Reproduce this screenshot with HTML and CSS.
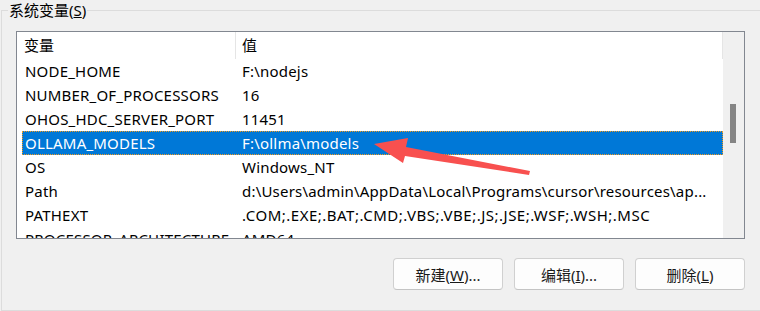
FILE: index.html
```html
<!DOCTYPE html>
<html lang="zh-CN">
<head>
  <meta charset="UTF-8" />
  <title>系统变量</title>
  <link rel="stylesheet" href="styles.css">
</head>
<body>
  <fieldset class="group">
    <legend>系统变量(<u>S</u>)</legend>
    <div class="content">
      <div class="listbox">
        <div class="table">
          <div class="header">
            <div class="hcell name">变量</div>
            <div class="hcell value">值</div>
            <div class="hcell end"></div>
          </div>
          <div class="row"><div class="cell name">NODE_HOME</div><div class="cell value">F:\nodejs</div></div>
          <div class="row"><div class="cell name">NUMBER_OF_PROCESSORS</div><div class="cell value">16</div></div>
          <div class="row"><div class="cell name">OHOS_HDC_SERVER_PORT</div><div class="cell value">11451</div></div>
          <div class="row selected"><div class="cell name">OLLAMA_MODELS</div><div class="cell value">F:\ollma\models</div></div>
          <div class="row"><div class="cell name">OS</div><div class="cell value">Windows_NT</div></div>
          <div class="row"><div class="cell name">Path</div><div class="cell value">d:\Users\admin\AppData\Local\Programs\cursor\resources\ap...</div></div>
          <div class="row"><div class="cell name">PATHEXT</div><div class="cell value punct">.COM;.EXE;.BAT;.CMD;.VBS;.VBE;.JS;.JSE;.WSF;.WSH;.MSC</div></div>
          <div class="row"><div class="cell name">PROCESSOR_ARCHITECTURE</div><div class="cell value">AMD64</div></div>
        </div>
        <div class="scrollbar"><div class="thumb"></div></div>
      </div>

      <div class="buttons">
        <button>新建(<u>W</u>)...</button>
        <button>编辑(<u>I</u>)...</button>
        <button>删除(<u>L</u>)</button>
      </div>
    </div>
  </fieldset>

  <!-- annotation arrow pointing at the selected row -->
  <svg class="arrow" width="760" height="311" viewBox="0 0 760 311">
    <polygon points="374,144 408,138 406,147 530,171 529,175 405,156 403,163" fill="#f8504f"/>
  </svg>
</body>
</html>
```

FILE: styles.css
```css
* {
  box-sizing: border-box;
}

body {
  margin: 0;
  width: 760px;
  height: 311px;
  overflow: hidden;
  position: relative;
  background-color: #f0f0f0;
  color: #000;
  font-family: "Noto Sans", "Noto Sans CJK SC", sans-serif;
  font-size: 15px;
}

.group {
  margin: 0 0 0 1px;
  padding: 0;
  width: 800px;
  height: 311px;
  border: 1px solid #dcdcdc;
}

.group legend {
  margin-left: 6px;
  padding: 0 1px;
  line-height: 20px;
}

.content {
  padding: 11px 0 0 14px;
  width: 743px;
}

.listbox {
  display: flex;
  width: 729px;
  height: 208px;
  border: 1px solid #828790;
  background-color: #fff;
}

.table {
  width: 706px;
  overflow: hidden;
}

.header {
  display: flex;
  height: 27px;
}

.hcell {
  line-height: 27px;
  height: 27px;
}

.hcell.name {
  width: 219px;
  padding-left: 7px;
  border-right: 1px solid #e5e5e5;
}

.hcell.value {
  flex: 1;
  padding-left: 6px;
}

.hcell.end {
  width: 2px;
  border-right: 1px solid #e5e5e5;
}

.row {
  display: flex;
  height: 24px;
  line-height: 24px;
  margin-left: 5px;
  white-space: nowrap;
  letter-spacing: 0.2px;
}

.cell.name {
  width: 213px;
  padding-left: 3px;
  overflow: hidden;
}

.cell.value {
  flex: 1;
  padding-left: 7px;
  overflow: hidden;
}

/* dots and semicolons are wider in the system font */
.cell.value.punct {
  letter-spacing: 0.5px;
}

.row.selected {
  background-color: #0078d7;
  color: #fff;
  outline: 1px dotted #f29a1e;
  outline-offset: -1px;
}

.scrollbar {
  width: 21px;
  background-color: #f0f0f0;
}

.thumb {
  width: 6px;
  height: 39px;
  margin: 72px 0 0 7px;
  background-color: #858585;
}

.buttons {
  display: flex;
  justify-content: flex-end;
  gap: 11px;
  margin-top: 19px;
  width: 729px;
}

.buttons button {
  width: 110px;
  height: 32px;
  padding: 0;
  border: 1px solid #d0d0d0;
  border-bottom-color: #c4c4c4;
  border-radius: 4px;
  background-color: #fdfdfd;
  color: #1a1a1a;
  font-family: "Noto Sans", "Noto Sans CJK SC", sans-serif;
  font-size: 15px;
}

.arrow {
  position: absolute;
  left: 0;
  top: 0;
  pointer-events: none;
}
```
